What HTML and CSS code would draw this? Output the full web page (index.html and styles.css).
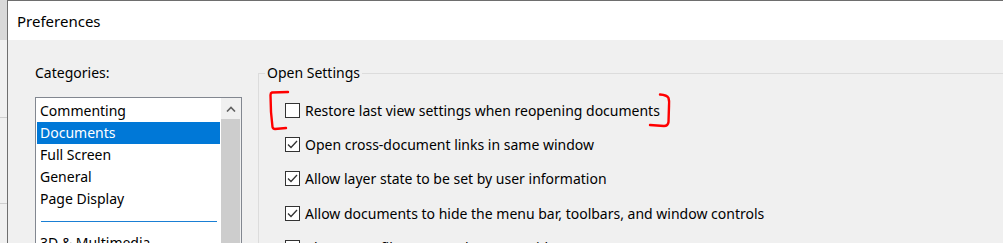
FILE: index.html
```html
<!DOCTYPE html>
<html>
<head>
<meta charset="utf-8">
<link rel="stylesheet" href="styles.css">
</head>
<body>
<div class="screen">
  <div class="strip">
    <div class="strip-top"></div>
    <div class="strip-line l1"></div>
    <div class="strip-line l2"></div>
  </div>
  <div class="window">
    <div class="titlebar">Preferences</div>
    <div class="content">
      <div class="categories">
        <div class="label">Categories:</div>
        <div class="listbox">
          <div class="items">
            <div class="item">Commenting</div>
            <div class="item selected">Documents</div>
            <div class="item">Full Screen</div>
            <div class="item">General</div>
            <div class="item">Page Display</div>
            <div class="sep"></div>
            <div class="item">3D &amp; Multimedia</div>
          </div>
          <div class="scrollbar">
            <div class="sb-btn">
              <svg width="10" height="6" viewBox="0 0 10 6"><path d="M1 5.5 L5 1.5 L9 5.5" fill="none" stroke="#606060" stroke-width="1.6"/></svg>
            </div>
            <div class="sb-thumb"></div>
          </div>
        </div>
      </div>
      <fieldset class="group">
        <legend>Open Settings</legend>
        <div class="row"><span class="cb"></span><span>Restore last view settings when reopening documents</span></div>
        <div class="row"><span class="cb checked"><svg viewBox="0 0 15 15" width="15" height="15"><path d="M3 7.5 L6 10.5 L12 4" fill="none" stroke="#333" stroke-width="1.3"/></svg></span><span>Open cross-document links in same window</span></div>
        <div class="row"><span class="cb checked"><svg viewBox="0 0 15 15" width="15" height="15"><path d="M3 7.5 L6 10.5 L12 4" fill="none" stroke="#333" stroke-width="1.3"/></svg></span><span>Allow layer state to be set by user information</span></div>
        <div class="row"><span class="cb checked"><svg viewBox="0 0 15 15" width="15" height="15"><path d="M3 7.5 L6 10.5 L12 4" fill="none" stroke="#333" stroke-width="1.3"/></svg></span><span>Allow documents to hide the menu bar, toolbars, and window controls</span></div>
        <div class="row"><span class="cb"></span><span>Always use filename as document title</span></div>
      </fieldset>
    </div>
  </div>
  <svg class="marks" width="1003" height="243" viewBox="0 0 1003 243">
    <path d="M288 92 L272 92.5 Q270.5 93 270.5 95 L271 112 L272.5 127 Q273 129 275 129 L286 128" fill="none" stroke="#ff0000" stroke-width="2.4" stroke-linecap="round" stroke-linejoin="round"/>
    <path d="M660 94.5 Q667 95 668.5 98 Q669.5 101 669 106 L668.5 122 Q668 126 664 126 L650 125" fill="none" stroke="#ff0000" stroke-width="2.4" stroke-linecap="round" stroke-linejoin="round"/>
  </svg>
</div>
</body>
</html>
```

FILE: styles.css
```css
html, body {
  margin: 0;
  padding: 0;
  width: 1003px;
  height: 243px;
  overflow: hidden;
  background: #f0f0f0;
  font-family: "Noto Sans", "Open Sans", sans-serif;
  font-size: 14px;
  color: #000;
}

.screen {
  position: relative;
  display: flex;
  width: 1003px;
  height: 243px;
  overflow: hidden;
}

.strip {
  width: 7px;
  flex: none;
  display: flex;
  flex-direction: column;
  background: #f0f0f0;
}

.strip-top {
  height: 40px;
  background: #d9d9d9;
}

.strip-line {
  height: 1px;
  background: #cfcfcf;
}

.l1 { margin-top: 77px; }
.l2 { margin-top: 85px; }

.window {
  flex: 1;
  min-width: 0;
  border-left: 1px solid #6f6f6f;
  border-top: 1px solid #6e6e6e;
  box-shadow: inset 0 1px 0 #a8a8a8;
  display: flex;
  flex-direction: column;
}

.titlebar {
  height: 39px;
  flex: none;
  background: #fff;
  padding-left: 9px;
  display: flex;
  align-items: center;
  font-size: 15px;
  box-sizing: border-box;
}

.content {
  flex: 1;
  display: flex;
  gap: 16px;
  padding: 23px 0 0 27px;
  background: #f0f0f0;
}

.categories {
  width: 207px;
  flex: none;
  display: flex;
  flex-direction: column;
}

.label {
  line-height: 20px;
  height: 20px;
  margin-bottom: 14px;
}

.listbox {
  border: 1px solid #828790;
  background: #fff;
  display: flex;
  height: 200px;
  box-sizing: border-box;
}

.items {
  flex: 1;
  padding: 2px 1px 0 1px;
}

.item {
  height: 22px;
  line-height: 22px;
  padding-left: 3px;
  white-space: nowrap;
}

.item.selected {
  background: #0078d7;
  color: #fff;
}

.sep {
  height: 1px;
  background: #1a7fd4;
  margin: 11px 3px 10px 4px;
}

.scrollbar {
  width: 19px;
  flex: none;
  display: flex;
  flex-direction: column;
  background: #f0f0f0;
  padding-right: 1px;
}

.sb-btn {
  height: 21px;
  display: flex;
  align-items: center;
  justify-content: center;
  background: #f0f0f0;
}

.sb-thumb {
  flex: 1;
  background: #cdcdcd;
}

.group {
  margin: 0;
  padding: 10px 0 0 0;
  border: 1px solid #dcdcdc;
  border-right: none;
  flex: 1;
  min-width: 0;
  height: 400px;
}

.group legend {
  padding: 0 2px;
  margin-left: 6px;
  line-height: 20px;
}

.row {
  display: flex;
  align-items: center;
  gap: 5px;
  height: 34.3px;
  padding-left: 26px;
  white-space: nowrap;
}

.cb {
  width: 15px;
  height: 15px;
  box-sizing: border-box;
  border: 1px solid #333;
  background: #fff;
  flex: none;
  position: relative;
}

.cb svg {
  position: absolute;
  left: -1px;
  top: -1px;
}

.marks {
  position: absolute;
  left: 0;
  top: 0;
  pointer-events: none;
}
```
